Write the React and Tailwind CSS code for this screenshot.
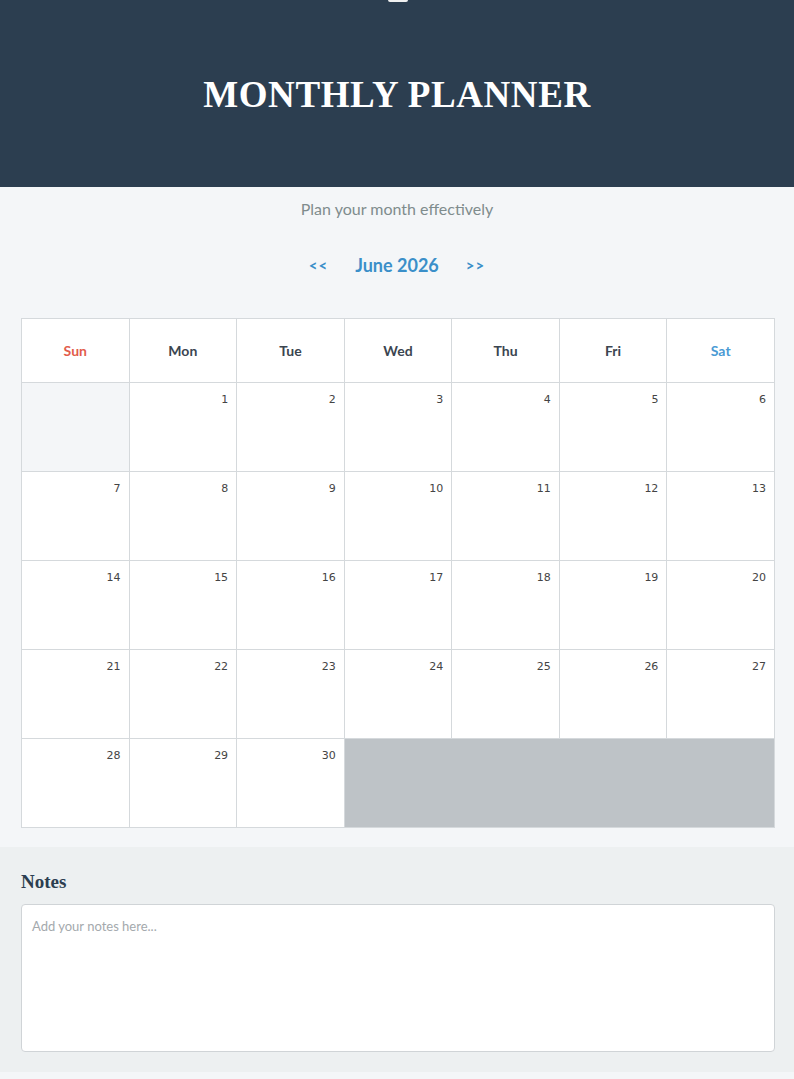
import React from 'react';

const days = ['Sun', 'Mon', 'Tue', 'Wed', 'Thu', 'Fri', 'Sat'];

const weeks = [
    [null, 1, 2, 3, 4, 5, 6],
    [7, 8, 9, 10, 11, 12, 13],
    [14, 15, 16, 17, 18, 19, 20],
    [21, 22, 23, 24, 25, 26, 27],
];

function DayCell({ day }) {
    return (
        <td
            className={`h-[89px] border border-[#d5d9dc] p-0 align-top ${day ? 'bg-white' : 'bg-[#f4f6f8]'}`}
        >
            {day && (
                <div className="pr-[8px] pt-[9px] text-right font-['DejaVu_Sans',sans-serif] text-[11px] text-[#444]">
                    {day}
                </div>
            )}
        </td>
    );
}

export default function App() {
    return (
        <div className="min-h-[1079px] bg-[#f4f6f8] font-['Lato',sans-serif]">
            <header className="relative flex h-[187px] items-center justify-center bg-[#2c3e50]">
                <span className="absolute left-[388px] top-[-10px] h-[12px] w-[20px] rounded-[2px] border-2 border-[#f0f0f0]" />
                <h1 className="pt-[2px] font-['Liberation_Serif',serif] text-[37px] font-bold tracking-[0.6px] text-white">
                    MONTHLY PLANNER
                </h1>
            </header>

            <p className="mt-[10px] text-center text-[16px] text-[#7f8c8d]">Plan your month effectively</p>

            <div className="mt-[31px] flex items-center justify-center gap-[27px] text-[#3a8fc9]">
                <button className="text-[15px] font-bold tracking-[1px]">&lt;&lt;</button>
                <span className="text-[18px] font-bold">June 2026</span>
                <button className="text-[15px] font-bold tracking-[1px]">&gt;&gt;</button>
            </div>

            <div className="pl-[21px] pr-[19px] pt-[39px]">
                <table className="w-full table-fixed border-collapse">
                    <thead>
                        <tr>
                            {days.map((d) => (
                                <th
                                    key={d}
                                    className={`h-[64px] border border-[#d5d9dc] bg-white text-[14px] font-bold ${
                                        d === 'Sun' ? 'text-[#e25c4b]' : d === 'Sat' ? 'text-[#4a9ad4]' : 'text-[#3b4550]'
                                    }`}
                                >
                                    {d}
                                </th>
                            ))}
                        </tr>
                    </thead>
                    <tbody>
                        {weeks.map((w, i) => (
                            <tr key={i}>
                                {w.map((d, j) => (
                                    <DayCell key={j} day={d} />
                                ))}
                            </tr>
                        ))}
                        <tr>
                            <DayCell day={28} />
                            <DayCell day={29} />
                            <DayCell day={30} />
                            <td colSpan={4} className="h-[89px] border border-[#d5d9dc] bg-[#bec3c7]" />
                        </tr>
                    </tbody>
                </table>
            </div>

            <section className="mt-[19px] bg-[#edf0f1] pb-[20px] pl-[21px] pr-[19px] pt-[21px]">
                <h2 className="font-['Liberation_Serif',serif] text-[19px] font-bold text-[#2c3e50]">Notes</h2>
                <textarea
                    placeholder="Add your notes here..."
                    className="mt-[7px] block h-[148px] w-full resize-none rounded-[4px] border border-[#d0d4d7] bg-white px-[10px] py-[12px] text-[13px] text-[#333] placeholder:text-[#a4a9ad] focus:outline-none"
                />
            </section>
        </div>
    );
}
